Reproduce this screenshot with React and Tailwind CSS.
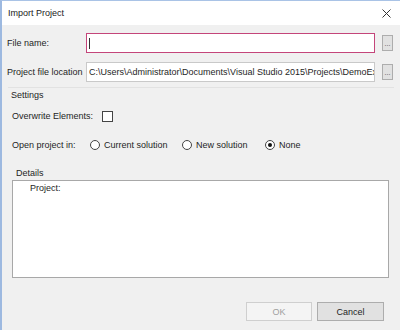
import React from 'react';

const Radio = ({ checked, label }) => (
  <label className="flex items-center gap-[4px] whitespace-nowrap">
    <span className="flex h-[10px] w-[10px] items-center justify-center rounded-full border border-[#444] bg-white">
      {checked && <span className="h-[4px] w-[4px] rounded-full bg-[#111]" />}
    </span>
    <span>{label}</span>
  </label>
);

const BrowseButton = () => (
  <button className="ml-[7px] flex h-[16px] w-[11px] items-end justify-center border border-[#adadad] bg-[#e1e1e1] pb-[3px] text-[7px] leading-none text-[#444]">
    ...
  </button>
);

export default function App() {
  return (
    <div
      className="flex h-[330px] w-[400px] flex-col overflow-hidden border-l-2 border-t border-l-[#9db9e0] border-t-[#a9c3e6] bg-[#f0f0f0] text-[9px] leading-[12px] text-[#1e1e1e]"
      style={{ fontFamily: '"Liberation Sans", Arial, sans-serif' }}
    >
      {/* Title bar */}
      <div className="flex h-[24px] items-center justify-between bg-white pl-[6px] pr-[9px]">
        <span className="text-[#222]">Import Project</span>
        <svg width="9" height="9" viewBox="0 0 9 9" className="text-[#333]">
          <path d="M0.5 0.5 L8.5 8.5 M8.5 0.5 L0.5 8.5" stroke="currentColor" strokeWidth="1" />
        </svg>
      </div>

      {/* File name */}
      <div className="mt-[8px] flex h-[20px] items-center pl-[5px]">
        <span className="w-[79px] shrink-0 whitespace-nowrap">File name:</span>
        <div className="flex h-[20px] w-[289px] items-center border border-[#c4457a] bg-white px-[2px]">
          <span className="h-[11px] w-px bg-[#333]" />
        </div>
        <BrowseButton />
      </div>

      {/* Project file location */}
      <div className="mt-[9px] flex h-[20px] items-center pl-[5px]">
        <span className="w-[79px] shrink-0 whitespace-nowrap">Project file location</span>
        <div className="flex h-[20px] w-[289px] items-center overflow-hidden whitespace-nowrap border border-[#c9c9c9] bg-white px-[2px]">
          C:\Users\Administrator\Documents\Visual Studio 2015\Projects\DemoExport
        </div>
        <BrowseButton />
      </div>

      {/* Settings */}
      <div className="mx-[6px] mt-[5px] flex h-[14px] items-center border-t border-[#e2e2e2] pl-[3px]">
        Settings
      </div>

      <div className="mt-[7px] flex h-[16px] items-center pl-[10px]">
        <span className="w-[90px] whitespace-nowrap">Overwrite Elements:</span>
        <span className="h-[11px] w-[11px] border border-[#444] bg-white" />
      </div>

      <div className="mt-[13px] flex h-[16px] items-center pl-[10px]">
        <span className="w-[78px] whitespace-nowrap">Open project in:</span>
        <div className="flex items-center">
          <div className="w-[92px]"><Radio label="Current solution" /></div>
          <div className="w-[83px]"><Radio label="New solution" /></div>
          <Radio checked label="None" />
        </div>
      </div>

      {/* Details */}
      <div className="mx-[6px] mt-[14px] flex flex-col">
        <span className="h-[12px] pl-[8px]">Details</span>
        <div className="ml-[4px] mr-[5px] mt-[1px] h-[98px] border border-[#a8a8a8] bg-white pl-[17px] pt-[1px]">
          Project:
        </div>
      </div>

      {/* Buttons */}
      <div className="mt-[24px] flex justify-end gap-[5px] pr-[16px]">
        <button className="h-[19px] w-[66px] border border-[#cfcfcf] bg-[#f4f4f4] text-[#a0a0a0]">OK</button>
        <button className="h-[19px] w-[67px] border border-[#adadad] bg-[#e1e1e1] text-[#1e1e1e]">Cancel</button>
      </div>
    </div>
  );
}
